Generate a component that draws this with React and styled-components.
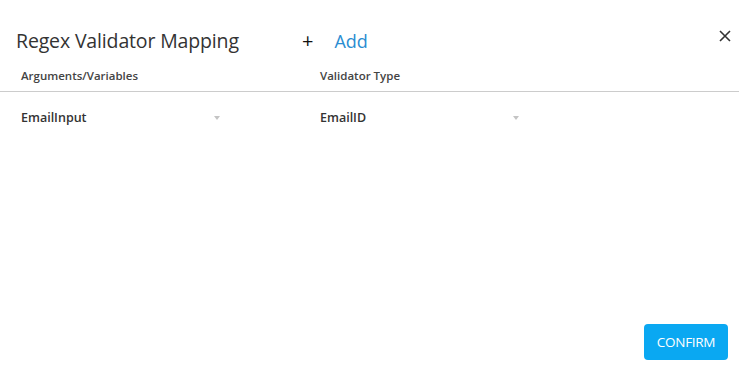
import React from "react";
import styled, { createGlobalStyle } from "styled-components";

const Global = createGlobalStyle`
  html, body { margin: 0; padding: 0; background: #fff; }
  body { font-family: "Open Sans", "Noto Sans", sans-serif; color: #333; }
  * { box-sizing: border-box; }
`;

const Dialog = styled.div`
  width: 739px;
  height: 384px;
  display: flex;
  flex-direction: column;
  background: #fff;
`;

const Header = styled.div`
  display: flex;
  align-items: center;
  height: 67px;
  padding: 14px 2px 0 16px;
`;

const Title = styled.h2`
  margin: 0;
  width: 286px;
  font-size: 19.5px;
  font-weight: 400;
  color: #333;
  letter-spacing: -0.15px;
`;

const AddButton = styled.button`
  display: flex;
  align-items: center;
  gap: 21px;
  padding: 0;
  border: 0;
  background: none;
  font-family: inherit;
  font-size: 18px;
  color: #2a8dd1;
  cursor: pointer;
`;

const Plus = styled.span`
  font-size: 20px;
  color: #111;
  line-height: 1;
`;

const CloseButton = styled.button`
  margin-left: auto;
  margin-top: -10px;
  width: 24px;
  height: 24px;
  padding: 0;
  border: 0;
  background: none;
  display: flex;
  align-items: center;
  justify-content: center;
  cursor: pointer;
`;

const HeadRow = styled.div`
  display: grid;
  grid-template-columns: 299px 1fr;
  padding: 0 0 0 21px;
  height: 25px;
  border-bottom: 1px solid #ccc;
`;

const HeadCell = styled.div`
  font-size: 11.5px;
  font-weight: 600;
  color: #444;
  line-height: 18px;
`;

const Row = styled.div`
  display: grid;
  grid-template-columns: 299px 1fr;
  padding: 17px 0 0 21px;
`;

const Select = styled.div`
  width: 198px;
  display: flex;
  align-items: center;
  justify-content: space-between;
  font-size: 12.5px;
  font-weight: 600;
  color: #333;
  line-height: 18px;
`;

const Caret = styled.span`
  width: 0;
  height: 0;
  border-left: 3.5px solid transparent;
  border-right: 3.5px solid transparent;
  border-top: 4px solid #c4c4c4;
  margin-right: -1px;
`;

const Spacer = styled.div`
  flex: 1;
`;

const Footer = styled.div`
  display: flex;
  justify-content: flex-end;
  padding: 0 11px 24px 0;
`;

const Confirm = styled.button`
  width: 84px;
  height: 36px;
  border: 0;
  border-radius: 4px;
  background: #0aa8f2;
  color: #fff;
  font-family: inherit;
  font-size: 13.5px;
  letter-spacing: -0.3px;
  cursor: pointer;
`;

const rows = [{ arg: "EmailInput", type: "EmailID" }];

export default function App() {
  return (
    <>
      <Global />
      <Dialog>
        <Header>
          <Title>Regex Validator Mapping</Title>
          <AddButton>
            <Plus>+</Plus>
            Add
          </AddButton>
          <CloseButton aria-label="Close">
            <svg width="12" height="12" viewBox="0 0 12 12">
              <path d="M1 1L11 11M11 1L1 11" stroke="#333" strokeWidth="1.6" />
            </svg>
          </CloseButton>
        </Header>
        <HeadRow>
          <HeadCell>Arguments/Variables</HeadCell>
          <HeadCell>Validator Type</HeadCell>
        </HeadRow>
        {rows.map((r) => (
          <Row key={r.arg}>
            <Select>
              {r.arg}
              <Caret />
            </Select>
            <Select>
              {r.type}
              <Caret />
            </Select>
          </Row>
        ))}
        <Spacer />
        <Footer>
          <Confirm>CONFIRM</Confirm>
        </Footer>
      </Dialog>
    </>
  );
}
